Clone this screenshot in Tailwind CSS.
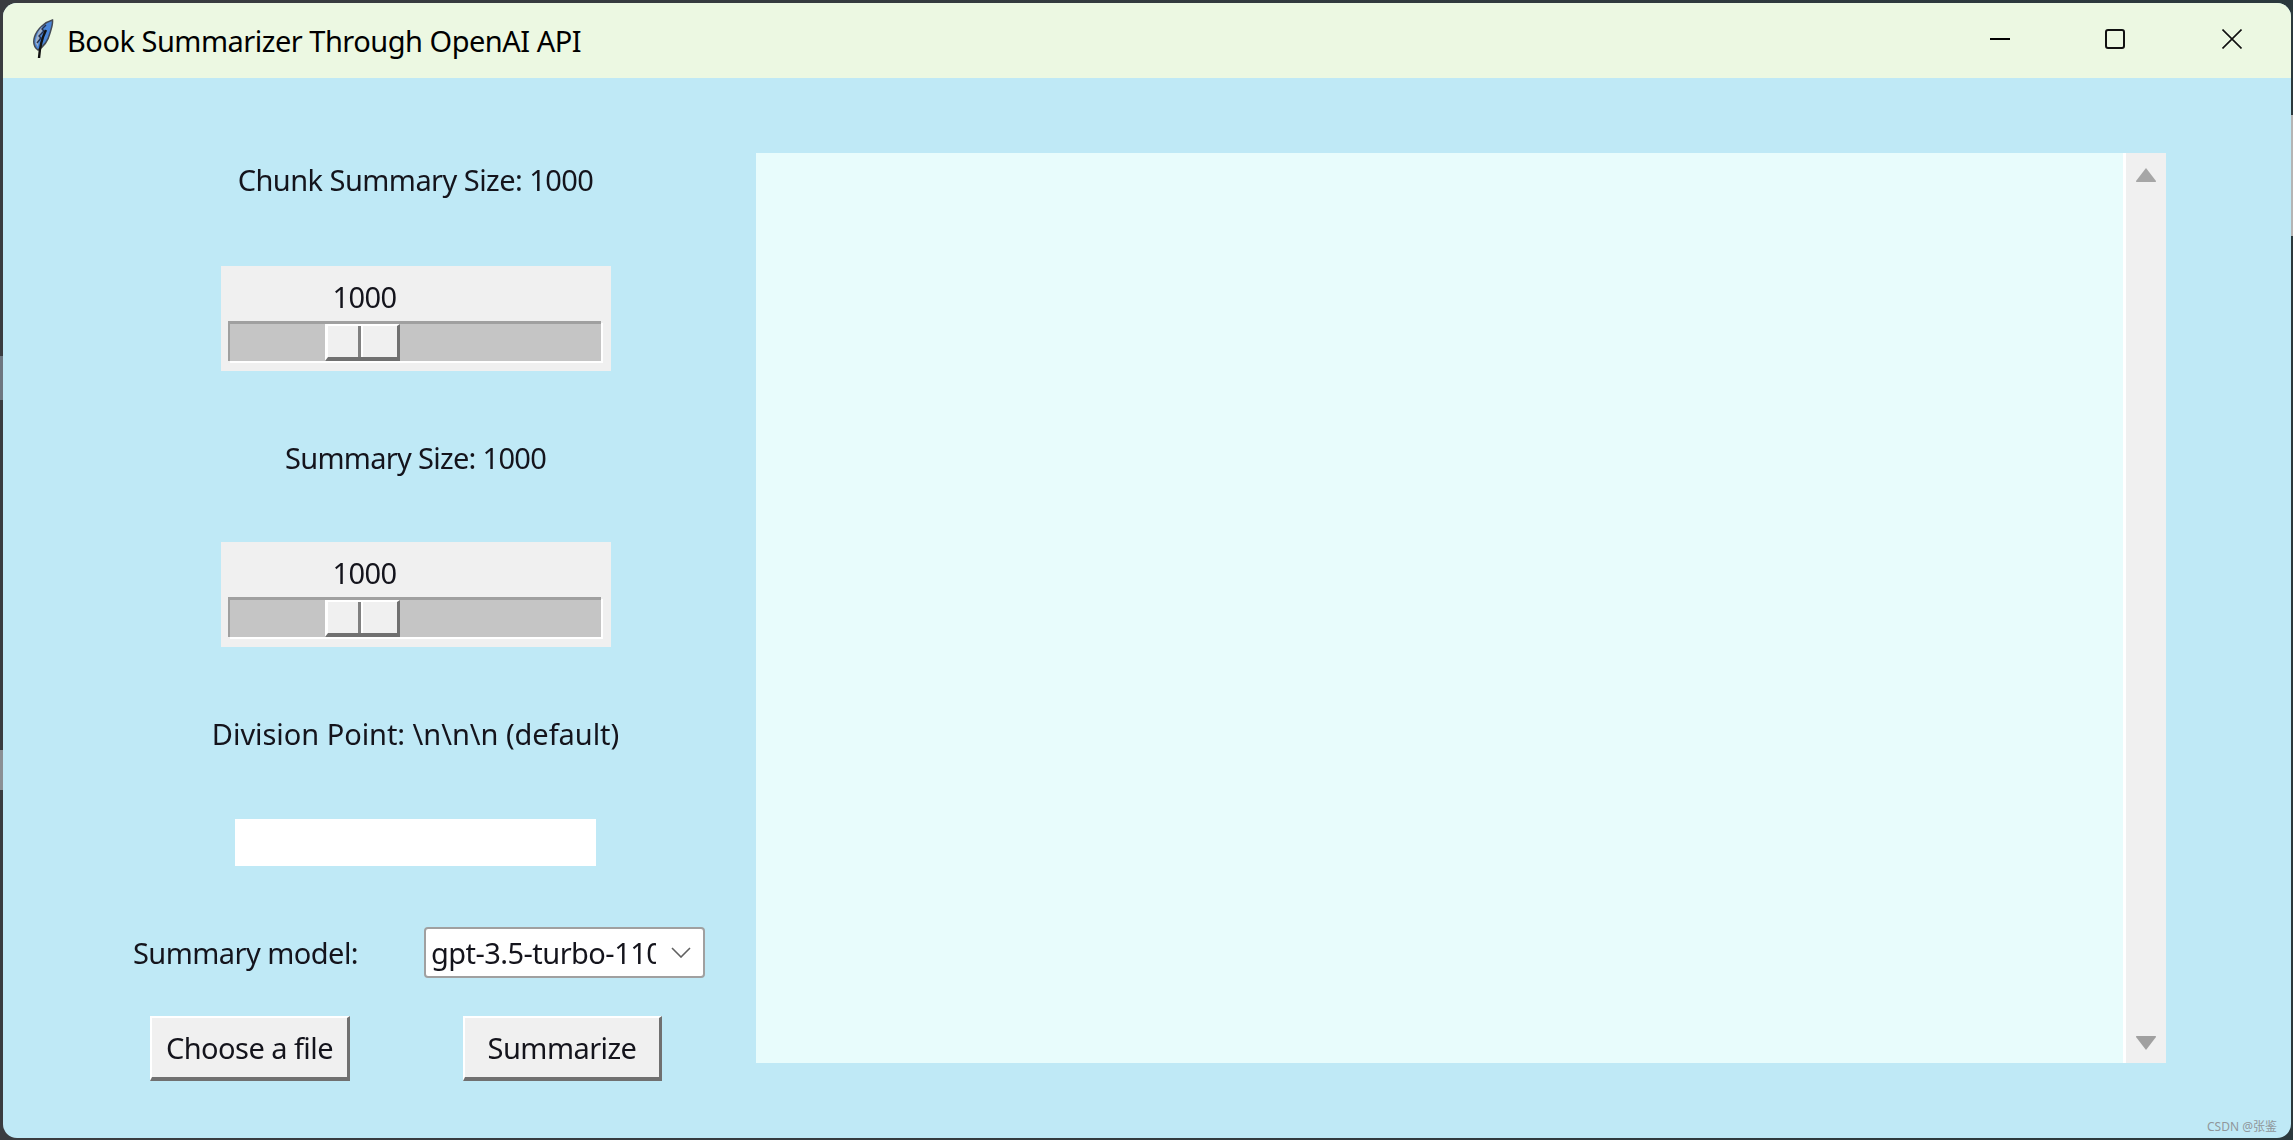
<!DOCTYPE html>
<html lang="en">

<head>
    <meta charset="UTF-8" />
    <meta name="viewport" content="width=device-width, initial-scale=1.0" />
    <title>Book Summarizer Through OpenAI API</title>
    <script src="https://cdn.jsdelivr.net/npm/@tailwindcss/browser@4"></script>
</head>

<body class="relative bg-linear-to-r from-[#3a3c40] to-[#2b393d] h-screen overflow-hidden font-['Noto_Sans','Noto_Sans_CJK_SC',sans-serif] text-black">
    <!-- bits of the desktop behind the window -->
    <div class="absolute left-0 top-[356px] w-[3px] h-[44px] bg-[#6d7680]"></div>
    <div class="absolute left-0 top-[750px] w-[3px] h-[40px] bg-[#8a8f94]"></div>
    <div class="absolute right-0 top-[115px] w-[2px] h-[121px] bg-[#b4b4b4]"></div>

    <div class="mt-[3px] ml-[3px] w-[2288px] h-[1135px] rounded-[14px] overflow-hidden flex flex-col bg-[#bfe9f6]">

        <!-- title bar -->
        <div class="h-[75px] bg-[#ecf8e2] flex items-center shrink-0 relative">
            <svg class="ml-[29px] w-[22px] h-[40px] -mt-[4px] blur-[0.4px]" viewBox="0 0 22 40">
                <path d="M20.500 1 C13 3 5 10 2.500 18 C1 23 2 28 6 31 C11 28 16 22 18 14 C19.500 9 21 5 20.500 1 Z" fill="#4a86d8" stroke="#454a54" stroke-width="1.500" />
                <path d="M10 8 C6 12 4 18 3.500 24 L6 28 C6 22 8 15 11 10 Z" fill="#9fb0c8" />
                <path d="M14 6 L10 10 L12 12 L7 17 L9 19 L5 24" fill="none" stroke="#26304a" stroke-width="1.400" />
                <path d="M14 11 C11 17 8 24 7 39" fill="none" stroke="#111" stroke-width="2.400" />
            </svg>
            <span class="ml-[13px] text-[29px] leading-none tracking-[-0.5px]">Book Summarizer Through OpenAI API</span>

            <!-- window buttons -->
            <div class="ml-auto flex items-center -mt-[3px]">
                <div class="w-[20px] h-[2px] bg-black"></div>
                <div class="ml-[95px] w-[20px] h-[20px] border-2 border-[#111] rounded-[3px]"></div>
                <svg class="ml-[97px] mr-[49px] w-[20px] h-[20px]" viewBox="0 0 20 20">
                    <path d="M0.500 0.500 L19.500 19.500 M19.500 0.500 L0.500 19.500" stroke="#111" stroke-width="1.600" fill="none" />
                </svg>
            </div>
        </div>

        <!-- content -->
        <div class="flex-1 flex relative">
            <div class="w-[753px] shrink-0 flex flex-col items-center pl-[72px] text-[29px] text-[#14141c] leading-none tracking-[-0.55px] blur-[0.4px]">
                <p class="mt-[87px]">Chunk Summary Size: 1000</p>

                <div class="mt-[72px] w-[390px] h-[105px] bg-[#f0f0f0] flex flex-col">
                    <span class="mt-[16px] ml-[112px]">1000</span>
                    <div class="mt-[10px] mx-[7px] w-[373px] h-[40px] bg-[#c5c5c5] border-t-[3px] border-l-[2px] border-[#a0a0a0] border-r-0 border-b-0 shadow-[2px_2px_0_#ffffff]">
                        <div class="ml-[95px] w-[75px] h-[37px] flex border-t-[2px] border-l-[3px] border-r-[3px] border-b-[4px] border-t-white border-l-white border-r-[#707070] border-b-[#707070] bg-[#f0f0f0]">
                            <div class="w-[33px] border-r-[3px] border-[#808080]"></div>
                            <div class="flex-1 border-l-[2px] border-white"></div>
                        </div>
                    </div>
                </div>

                <p class="mt-[72px] tracking-[-0.7px]">Summary Size: 1000</p>

                <div class="mt-[70px] w-[390px] h-[105px] bg-[#f0f0f0] flex flex-col">
                    <span class="mt-[16px] ml-[112px]">1000</span>
                    <div class="mt-[10px] mx-[7px] w-[373px] h-[40px] bg-[#c5c5c5] border-t-[3px] border-l-[2px] border-[#a0a0a0] border-r-0 border-b-0 shadow-[2px_2px_0_#ffffff]">
                        <div class="ml-[95px] w-[75px] h-[37px] flex border-t-[2px] border-l-[3px] border-r-[3px] border-b-[4px] border-t-white border-l-white border-r-[#707070] border-b-[#707070] bg-[#f0f0f0]">
                            <div class="w-[33px] border-r-[3px] border-[#808080]"></div>
                            <div class="flex-1 border-l-[2px] border-white"></div>
                        </div>
                    </div>
                </div>

                <p class="mt-[72px] tracking-[-0.05px]">Division Point: \n\n\n (default)</p>

                <div class="mt-[71px] w-[361px] h-[47px] bg-white"></div>

                <div class="mt-[61px] w-full flex items-center">
                    <span class="ml-[58px] w-[291px] shrink-0">Summary model:</span>
                    <div class="w-[281px] h-[51px] shrink-0 bg-white border-2 border-[#a0a0a0] rounded-[4px] flex items-center">
                        <span class="ml-[5px] w-[225px] overflow-hidden whitespace-nowrap leading-normal">gpt-3.5-turbo-1106</span>
                        <svg class="ml-[15px] w-[20px] h-[11px]" viewBox="0 0 20 11">
                            <path d="M1 1 L10 10 L19 1" fill="none" stroke="#606060" stroke-width="1.600" />
                        </svg>
                    </div>
                </div>

                <div class="mt-[38px] w-full flex">
                    <button class="ml-[75px] w-[200px] h-[65px] bg-[#f0f0f0] border-t-[2px] border-l-[2px] border-r-[3px] border-b-[4px] border-t-white border-l-white border-r-[#707070] border-b-[#707070]">Choose a file</button>
                    <button class="ml-[113px] w-[199px] h-[65px] bg-[#f0f0f0] border-t-[2px] border-l-[2px] border-r-[3px] border-b-[4px] border-t-white border-l-white border-r-[#707070] border-b-[#707070]">Summarize</button>
                </div>
            </div>

            <!-- text area with scrollbar -->
            <div class="mt-[75px] h-[910px] flex">
                <div class="w-[1370px] bg-[#e8fcfc] border-r-[3px] border-white"></div>
                <div class="w-[40px] bg-[#f0f0f0] flex flex-col items-center justify-between pt-[14px] pb-[12px]">
                    <svg class="w-[22px] h-[16px]" viewBox="0 0 22 16"><path d="M11 1 L21 14 Q21.500 15 20 15 L2 15 Q0.500 15 1 14 Z" fill="#a6a6a6" /></svg>
                    <svg class="w-[22px] h-[16px]" viewBox="0 0 22 16"><path d="M11 15 L21 2 Q21.500 1 20 1 L2 1 Q0.500 1 1 2 Z" fill="#a0a0a0" /></svg>
                </div>
            </div>

            <!-- watermark -->
            <span class="absolute right-[14px] bottom-[5px] text-[12px] leading-none text-[#8f979b]">CSDN @张鉴</span>
        </div>
    </div>
</body>

</html>
